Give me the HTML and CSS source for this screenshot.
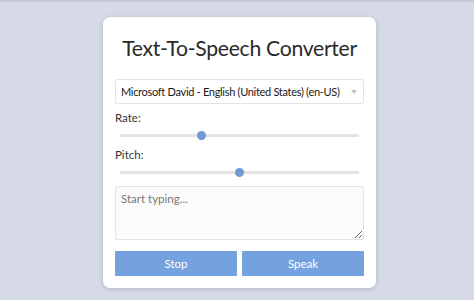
FILE: index.html
```html
<!DOCTYPE html>
<html lang="en">

<head>
  <meta charset="UTF-8" />
  <meta name="viewport" content="width=device-width, initial-scale=1.0" />
  <title>Text-To-Speech Converter</title>
  <link rel="stylesheet" href="styles.css">
</head>

<body>
  <div class="page">
    <div class="card">
      <h1 class="title">Text-To-Speech Converter</h1>

      <div class="select-box">
        <span class="select-text">Microsoft David - English (United States) (en-US)</span>
        <span class="caret"></span>
      </div>

      <label class="label" for="rate">Rate:</label>
      <div class="range-row">
        <input type="range" id="rate" class="range" min="0.5" max="2" step="0.1" value="1">
      </div>

      <label class="label label-pitch" for="pitch">Pitch:</label>
      <div class="range-row">
        <input type="range" id="pitch" class="range" min="0" max="2" step="0.1" value="1">
      </div>

      <textarea class="text" placeholder="Start typing..."></textarea>

      <div class="btns">
        <button class="btn">Stop</button>
        <button class="btn">Speak</button>
      </div>
    </div>
  </div>
</body>

</html>
```

FILE: styles.css
```css
* {
  box-sizing: border-box;
}

body {
  margin: 0;
  height: 300px;
  background-color: #d6dae6;
  border-top: 2px solid #c6cad6;
  font-family: Lato, "Noto Sans", sans-serif;
  color: #222;
  overflow: hidden;
}

.page {
  display: flex;
  justify-content: center;
  padding: 15px 0 0 5px;
}

.card {
  width: 273px;
  height: 271px;
  padding: 14px 12px 0;
  background-color: #fff;
  border-radius: 7px;
  box-shadow: 0 1px 4px rgba(60, 70, 100, 0.25);
  display: flex;
  flex-direction: column;
}

.title {
  margin: 0 0 14px;
  height: 34px;
  line-height: 34px;
  font-size: 21.2px;
  font-weight: 400;
  text-align: center;
  white-space: nowrap;
  color: #2a2a2a;
  letter-spacing: -0.3px;
}

.select-box {
  display: flex;
  align-items: center;
  justify-content: space-between;
  height: 25px;
  padding: 0 6px 0 5px;
  border: 1px solid #e4e4e4;
  border-radius: 2px;
  font-size: 11px;
  letter-spacing: -0.3px;
  white-space: nowrap;
  color: #1a1a1a;
}

.caret {
  width: 0;
  height: 0;
  border-left: 3px solid transparent;
  border-right: 3px solid transparent;
  border-top: 4px solid #c4c4c4;
}

.label {
  display: block;
  margin-top: 6px;
  height: 16px;
  line-height: 16px;
  font-size: 11.5px;
  color: #333;
}

.label-pitch {
  margin-top: 3px;
}

.range-row {
  display: flex;
  align-items: center;
  height: 18px;
  padding-left: 5px;
}

.range {
  -webkit-appearance: none;
  appearance: none;
  width: 239px;
  height: 3px;
  margin: 0;
  background: #e2e2e2;
  border-radius: 2px;
  outline: none;
}

.range::-webkit-slider-thumb {
  -webkit-appearance: none;
  width: 9px;
  height: 9px;
  border-radius: 50%;
  background: #6f9ad8;
  border: none;
}

.text {
  margin-top: 5px;
  height: 54px;
  padding: 5px 5px;
  border: 1px solid #e4e4e4;
  border-radius: 2px;
  background: #fbfbfb;
  font-family: Lato, "Noto Sans", sans-serif;
  font-size: 11.5px;
  resize: vertical;
}

.text::placeholder {
  color: #777;
}

.btns {
  display: flex;
  gap: 5px;
  margin-top: 11px;
}

.btn {
  flex: 1;
  height: 25px;
  border: none;
  border-radius: 1px;
  background-color: #73a2de;
  color: #fff;
  font-family: Lato, "Noto Sans", sans-serif;
  font-size: 11.5px;
}
```
